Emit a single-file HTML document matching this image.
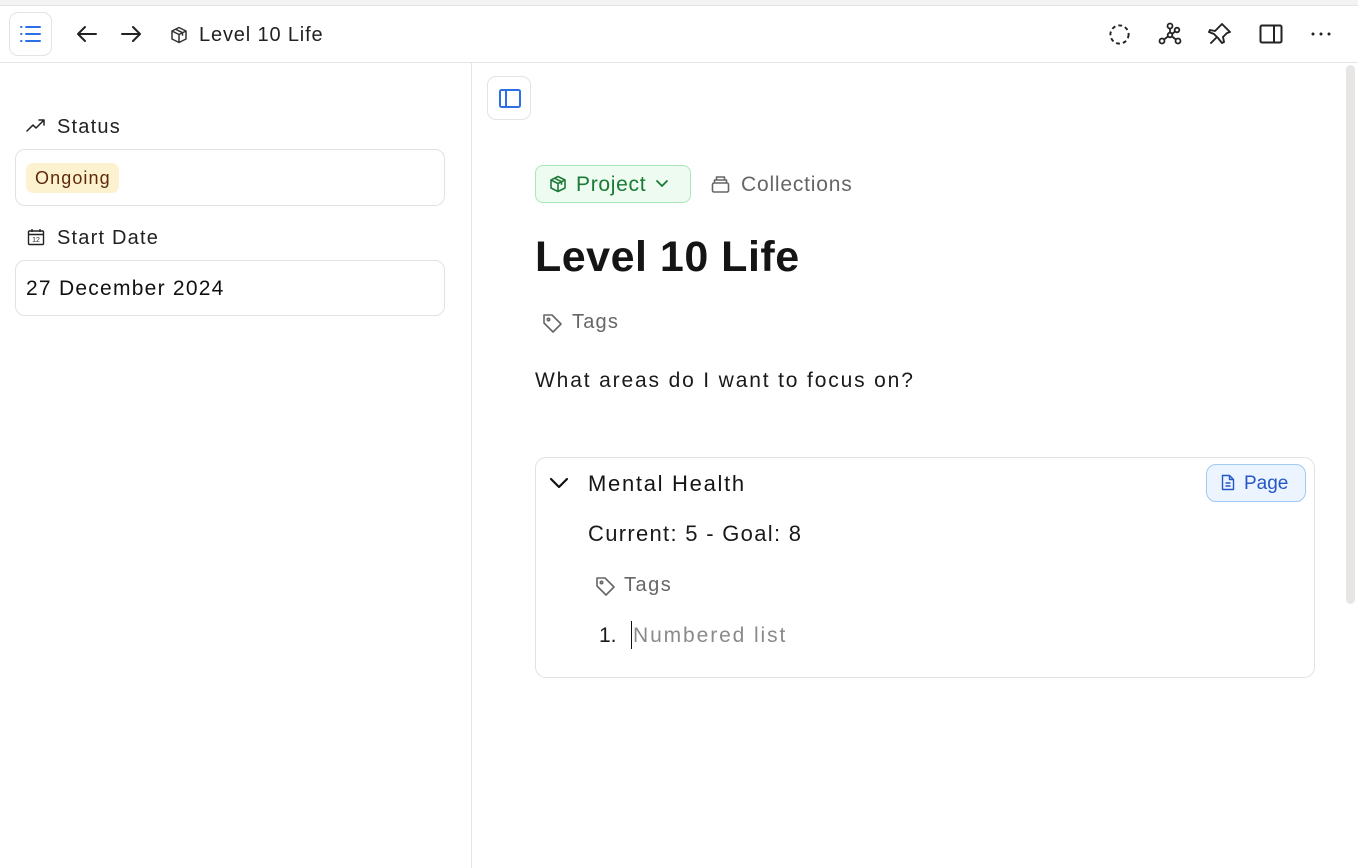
<!DOCTYPE html>
<html><head><meta charset="utf-8"><style>
*{box-sizing:border-box;margin:0;padding:0}
body{width:1358px;height:868px;overflow:hidden;background:#fff;font-family:"Liberation Sans",sans-serif;color:#1f1f1f;position:relative}
.abs{position:absolute;white-space:nowrap}
svg{display:block}
</style></head><body>
<div class="abs" style="left:0;top:0;width:1358px;height:6px;background:#f3f3f3;border-bottom:1px solid #e4e4e4"></div>
<div class="abs" style="left:0;top:62px;width:1358px;height:1px;background:#e5e5e5"></div>
<div class="abs" style="left:471px;top:63px;width:1px;height:805px;background:#e5e5e5"></div>
<div class="abs" style="left:1346px;top:65px;width:9px;height:539px;background:#e8e6e4;border-radius:5px"></div>

<div class="abs" style="left:9px;top:12px;width:43px;height:44px;border:1px solid #e3e3e3;border-radius:9px;background:#fff"></div>
<svg class="abs" style="left:20px;top:24px" width="22" height="20" viewBox="0 0 22 20" stroke="#2f6fe6" stroke-width="2" stroke-linecap="round"><path d="M1 3h.5M1 10h.5M1 17h.5M6 3h14M6 10h14M6 17h14"/></svg>
<svg class="abs" style="left:76px;top:24px" width="22" height="20" viewBox="0 0 22 20" fill="none" stroke="#222" stroke-width="2" stroke-linecap="round" stroke-linejoin="round"><path d="M20 10H2M9 3L2 10l7 7"/></svg>
<svg class="abs" style="left:120px;top:24px" width="22" height="20" viewBox="0 0 22 20" fill="none" stroke="#222" stroke-width="2" stroke-linecap="round" stroke-linejoin="round"><path d="M2 10h18M13 3l7 7-7 7"/></svg>
<svg class="abs" style="left:170px;top:26px" width="18" height="18" viewBox="0 0 18 18" fill="none" stroke="#333" stroke-width="1.5" stroke-linejoin="round"><path d="M9 1.5L16 5v8l-7 3.5L2 13V5zM2 5l7 3.5L16 5M9 8.5v8M5.5 3.2l7 3.5v3"/></svg>
<div class="abs" style="left:199px;top:24px;font-size:20px;color:#222;letter-spacing:0.85px">Level 10 Life</div>

<svg class="abs" style="left:1108px;top:23px" width="23" height="23" viewBox="0 0 24 24" fill="none" stroke="#222" stroke-width="2" stroke-dasharray="4 3.2"><circle cx="12" cy="12" r="9.5"/></svg>
<svg class="abs" style="left:1158px;top:22px" width="25" height="24" viewBox="0 0 25 24" fill="none" stroke="#222" stroke-width="1.8"><circle cx="12" cy="4" r="2.5"/><circle cx="4" cy="19" r="2.5"/><circle cx="20" cy="19" r="2.5"/><circle cx="19" cy="8" r="2.3"/><circle cx="12" cy="13" r="2.3"/><path d="M12 6.5v4M10 14.5l-4 3M14 14.5l4 3M14 12l3-2.5"/></svg>
<svg class="abs" style="left:1208px;top:22px" width="24" height="24" viewBox="0 0 24 24" fill="none" stroke="#222" stroke-width="1.9" stroke-linejoin="round" stroke-linecap="round"><path d="M14 2l8 8-3 1-4 4 1 5-2 1-4-5-4-4-5-2 1-2 5 1 4-4z M8 16l-5 5"/></svg>
<svg class="abs" style="left:1259px;top:24px" width="24" height="20" viewBox="0 0 24 20" fill="none" stroke="#222" stroke-width="2"><rect x="1.5" y="1.5" width="21" height="17" rx="1.5"/><path d="M15 1.5v17"/></svg>
<svg class="abs" style="left:1311px;top:32px" width="20" height="4" viewBox="0 0 20 4" fill="#222"><circle cx="2" cy="2" r="1.5"/><circle cx="10" cy="2" r="1.5"/><circle cx="18" cy="2" r="1.5"/></svg>

<!-- left panel -->
<svg class="abs" style="left:26px;top:118px" width="20" height="16" viewBox="0 0 20 16" fill="none" stroke="#222" stroke-width="1.5" stroke-linecap="round" stroke-linejoin="round"><path d="M1 13l6-6 3 3 8-8M13 2h5v5"/></svg>
<div class="abs" style="left:57px;top:116px;font-size:20px;color:#222;letter-spacing:1.2px">Status</div>
<div class="abs" style="left:15px;top:149px;width:430px;height:57px;border:1px solid #e2e2e2;border-radius:10px"></div>
<div class="abs" style="left:26px;top:163px;width:93px;height:30px;background:#fdf2cf;border-radius:7px;font-size:18px;color:#5c2a0a;padding:5px 0 0 9px;letter-spacing:1.1px">Ongoing</div>
<svg class="abs" style="left:27px;top:228px" width="18" height="18" viewBox="0 0 18 18" fill="none" stroke="#222" stroke-width="1.4"><rect x="1.5" y="3" width="15" height="13.5" rx="1"/><path d="M1.5 6.5h15M5 1v3M13 1v3"/><text x="9" y="14" font-size="7" text-anchor="middle" fill="#222" stroke="none" font-family="Liberation Sans">12</text></svg>
<div class="abs" style="left:57px;top:227px;font-size:20px;color:#222;letter-spacing:1.2px">Start Date</div>
<div class="abs" style="left:15px;top:260px;width:430px;height:56px;border:1px solid #e2e2e2;border-radius:10px"></div>
<div class="abs" style="left:26px;top:277px;font-size:21px;color:#111;letter-spacing:1.25px">27 December 2024</div>

<!-- main -->
<div class="abs" style="left:487px;top:76px;width:44px;height:44px;border:1px solid #e3e3e3;border-radius:9px"></div>
<svg class="abs" style="left:499px;top:89px" width="22" height="19" viewBox="0 0 22 19" fill="none" stroke="#2f6fe6" stroke-width="2"><rect x="1" y="1" width="20" height="17" rx="1.5"/><path d="M7 1v17"/></svg>

<div class="abs" style="left:535px;top:165px;width:156px;height:38px;border:1px solid #a8e6b8;background:#eefbf1;border-radius:8px"></div>
<svg class="abs" style="left:549px;top:175px" width="18" height="18" viewBox="0 0 18 18" fill="none" stroke="#1f7a3a" stroke-width="1.6" stroke-linejoin="round"><path d="M9 1.5L16 5v8l-7 3.5L2 13V5zM2 5l7 3.5L16 5M9 8.5v8M5.5 3.2l7 3.5v3"/></svg>
<div class="abs" style="left:576px;top:173px;font-size:21px;color:#1a7a35;letter-spacing:0.7px">Project</div>
<svg class="abs" style="left:655px;top:179px" width="14" height="10" viewBox="0 0 14 10" fill="none" stroke="#1a7a35" stroke-width="1.8" stroke-linecap="round" stroke-linejoin="round"><path d="M2 2l5 5 5-5"/></svg>
<svg class="abs" style="left:711px;top:175px" width="19" height="18" viewBox="0 0 19 18" fill="none" stroke="#666" stroke-width="1.6" stroke-linejoin="round"><rect x="1.5" y="8" width="16" height="9" rx="1.5"/><path d="M3.5 8V5h12v3M5.5 5V2h8v3"/></svg>
<div class="abs" style="left:741px;top:173px;font-size:21px;color:#666;letter-spacing:0.8px">Collections</div>

<div class="abs" style="left:535px;top:233px;font-size:43px;font-weight:bold;color:#151515;letter-spacing:0.5px">Level 10 Life</div>

<svg class="abs" style="left:542px;top:313px" width="21" height="21" viewBox="0 0 21 21" fill="none" stroke="#666" stroke-width="1.6" stroke-linejoin="round"><path d="M2 2h8l9 9-8 8-9-9z"/><circle cx="6.5" cy="6.5" r="1.2"/></svg>
<div class="abs" style="left:572px;top:311px;font-size:20px;color:#666;letter-spacing:1.2px">Tags</div>
<div class="abs" style="left:535px;top:369px;font-size:21px;color:#1a1a1a;letter-spacing:1.85px">What areas do I want to focus on?</div>

<div class="abs" style="left:535px;top:457px;width:780px;height:221px;border:1px solid #e2e2e2;border-radius:11px"></div>
<svg class="abs" style="left:548px;top:476px" width="22" height="14" viewBox="0 0 22 14" fill="none" stroke="#111" stroke-width="2.2" stroke-linecap="round" stroke-linejoin="round"><path d="M3 3l8 8 8-8"/></svg>
<div class="abs" style="left:588px;top:471px;font-size:22px;color:#151515;letter-spacing:1.7px">Mental Health</div>
<div class="abs" style="left:1206px;top:464px;width:100px;height:38px;border:1px solid #9fcaf5;background:#ebf4ff;border-radius:10px"></div>
<svg class="abs" style="left:1221px;top:474px" width="14" height="17" viewBox="0 0 14 17" fill="none" stroke="#2558c7" stroke-width="1.4" stroke-linejoin="round"><path d="M1.5 1.5h7l4 4v10h-11zM8.5 1.5v4h4M4.5 9h5M4.5 12h5"/></svg>
<div class="abs" style="left:1244px;top:473px;font-size:19px;color:#2558c7">Page</div>
<div class="abs" style="left:588px;top:521px;font-size:22px;color:#1a1a1a;letter-spacing:1.3px">Current: 5 - Goal: 8</div>
<svg class="abs" style="left:595px;top:576px" width="21" height="21" viewBox="0 0 21 21" fill="none" stroke="#666" stroke-width="1.6" stroke-linejoin="round"><path d="M2 2h8l9 9-8 8-9-9z"/><circle cx="6.5" cy="6.5" r="1.2"/></svg>
<div class="abs" style="left:624px;top:574px;font-size:20px;color:#666;letter-spacing:1.5px">Tags</div>
<div class="abs" style="left:599px;top:624px;font-size:21px;color:#1a1a1a">1.</div>
<div class="abs" style="left:631px;top:621px;width:1px;height:28px;background:#111"></div>
<div class="abs" style="left:633px;top:624px;font-size:21px;color:#8a8a8a;letter-spacing:1.9px">Numbered list</div>
</body></html>
